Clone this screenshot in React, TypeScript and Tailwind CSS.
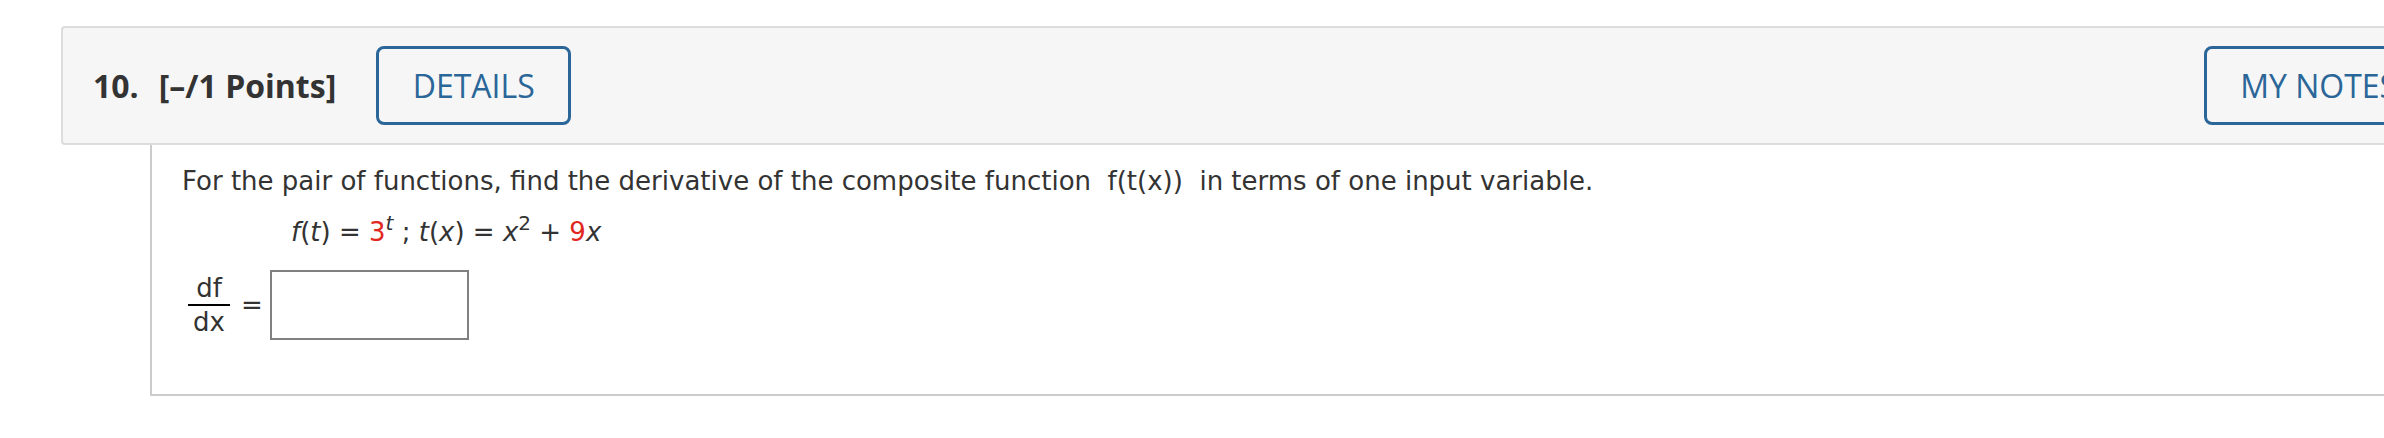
import React from "react";

export default function App() {
  const body = { fontFamily: '"DejaVu Sans", Verdana, sans-serif' };
  const head = { fontFamily: '"Open Sans", "Noto Sans", sans-serif' };
  return (
    <div className="w-[2384px] h-[438px] bg-white overflow-hidden">
      <div className="pt-[26px] pl-[61px] w-[2600px]">
        <div
          className="flex items-center h-[119px] bg-[#f6f6f6] border-2 border-r-0 border-[#dddddd] rounded-l-[4px]"
          style={head}
        >
          <span className="ml-[30px] text-[32px] font-bold text-[#333333] leading-none">10.</span>
          <span className="ml-[20px] text-[32px] font-bold text-[#333333] leading-none">[–/1 Points]</span>
          <button className="ml-[40px] w-[195px] h-[79px] border-[3px] border-[#2b6699] rounded-[8px] text-[32px] text-[#2b6699] leading-none">
            DETAILS
          </button>
          <button className="ml-[1633px] w-[240px] h-[79px] border-[3px] border-[#2b6699] rounded-[8px] text-[32px] text-[#2b6699] leading-none text-left pl-[33px]">
            MY NOTES
          </button>
        </div>
        <div
          className="ml-[89px] h-[251px] border-l-2 border-b-2 border-[#cccccc] pl-[30px] pt-[18px] text-[#333333]"
          style={body}
        >
          <p className="text-[26px] leading-[36px]">
            For the pair of functions, find the derivative of the composite function&nbsp; f(t(x))&nbsp; in terms of one input variable.
          </p>
          <p className="mt-[15px] ml-[109px] text-[26px] leading-[36px]">
            <i>f</i>(<i>t</i>) = <span className="text-[#e0281e]">3</span>
            <sup className="text-[20px] -top-[11px]"><i>t</i></sup> ; <i>t</i>(<i>x</i>) = <i>x</i>
            <sup className="text-[20px] -top-[11px]">2</sup> + <span className="text-[#e0281e]">9</span><i>x</i>
          </p>
          <div className="mt-[20px] ml-[6px] flex items-center">
            <div className="flex flex-col items-center w-[42px] text-[26px] leading-none">
              <span className="pb-[3px]">df</span>
              <span className="w-full h-[2px] bg-black"></span>
              <span className="pt-[3px]">dx</span>
            </div>
            <span className="ml-[11px] text-[26px]">=</span>
            <div className="ml-[7px] w-[199px] h-[70px] border-2 border-[#808080] bg-white"></div>
          </div>
        </div>
      </div>
    </div>
  );
}
